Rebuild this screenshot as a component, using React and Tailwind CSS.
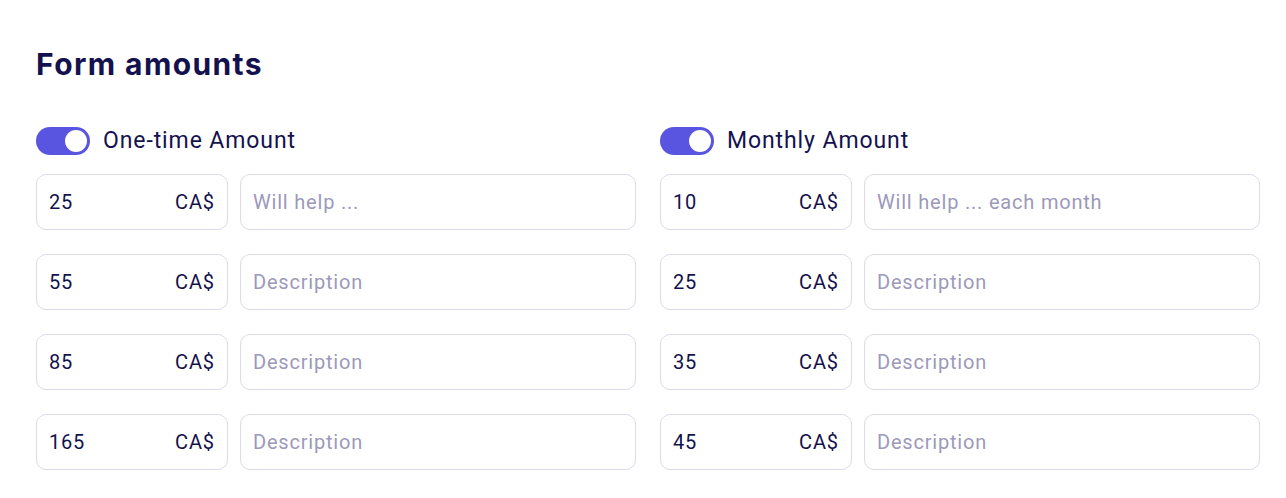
import { useState } from "react";

const oneTime = [
  { amount: "25", desc: "Will help ..." },
  { amount: "55", desc: "Description" },
  { amount: "85", desc: "Description" },
  { amount: "165", desc: "Description" },
];

const monthly = [
  { amount: "10", desc: "Will help ... each month" },
  { amount: "25", desc: "Description" },
  { amount: "35", desc: "Description" },
  { amount: "45", desc: "Description" },
];

function Toggle({ on, onChange }) {
  return (
    <button
      onClick={() => onChange(!on)}
      className={`flex items-center w-[54px] h-[28px] rounded-full p-[3px] ${
        on ? "bg-[#5a55e0] justify-end" : "bg-[#d9d8e6] justify-start"
      }`}
    >
      <span className="block w-[22px] h-[22px] rounded-full bg-white" />
    </button>
  );
}

function AmountColumn({ title, rows }) {
  const [on, setOn] = useState(true);
  return (
    <div className="flex flex-col">
      <div className="flex items-center gap-[13px] h-[28px]">
        <Toggle on={on} onChange={setOn} />
        <span className="text-[23px] text-[#14114f] tracking-[0.9px]">{title}</span>
      </div>
      <div className="flex flex-col gap-6 mt-[19px]">
        {rows.map((r, i) => (
          <div key={i} className="flex gap-3">
            <div className="flex items-center justify-between w-[192px] h-[56px] px-3 border border-[#dddbe9] rounded-[10px]">
              <input
                defaultValue={r.amount}
                className="w-[100px] outline-none text-[20px] tracking-[0.8px] text-[#14114f] bg-transparent"
              />
              <span className="text-[20px] tracking-[0.9px] text-[#14114f]">CA$</span>
            </div>
            <input
              placeholder={r.desc}
              className="flex-1 h-[56px] px-3 border border-[#dddbe9] rounded-[10px] outline-none text-[20px] tracking-[0.8px] text-[#14114f] placeholder:text-[#9c99b9]"
            />
          </div>
        ))}
      </div>
    </div>
  );
}

export default function App() {
  return (
    <div className="w-[1286px] h-[498px] bg-white px-9 pt-[44px] font-['Roboto',sans-serif]">
      <h1 className="font-['Inter',sans-serif] font-bold text-[30px] leading-[40px] tracking-[1.4px] text-[#14114f]">
        Form amounts
      </h1>
      <div className="grid grid-cols-2 gap-6 mt-[43px] w-[1224px]">
        <AmountColumn title="One-time Amount" rows={oneTime} />
        <AmountColumn title="Monthly Amount" rows={monthly} />
      </div>
    </div>
  );
}
